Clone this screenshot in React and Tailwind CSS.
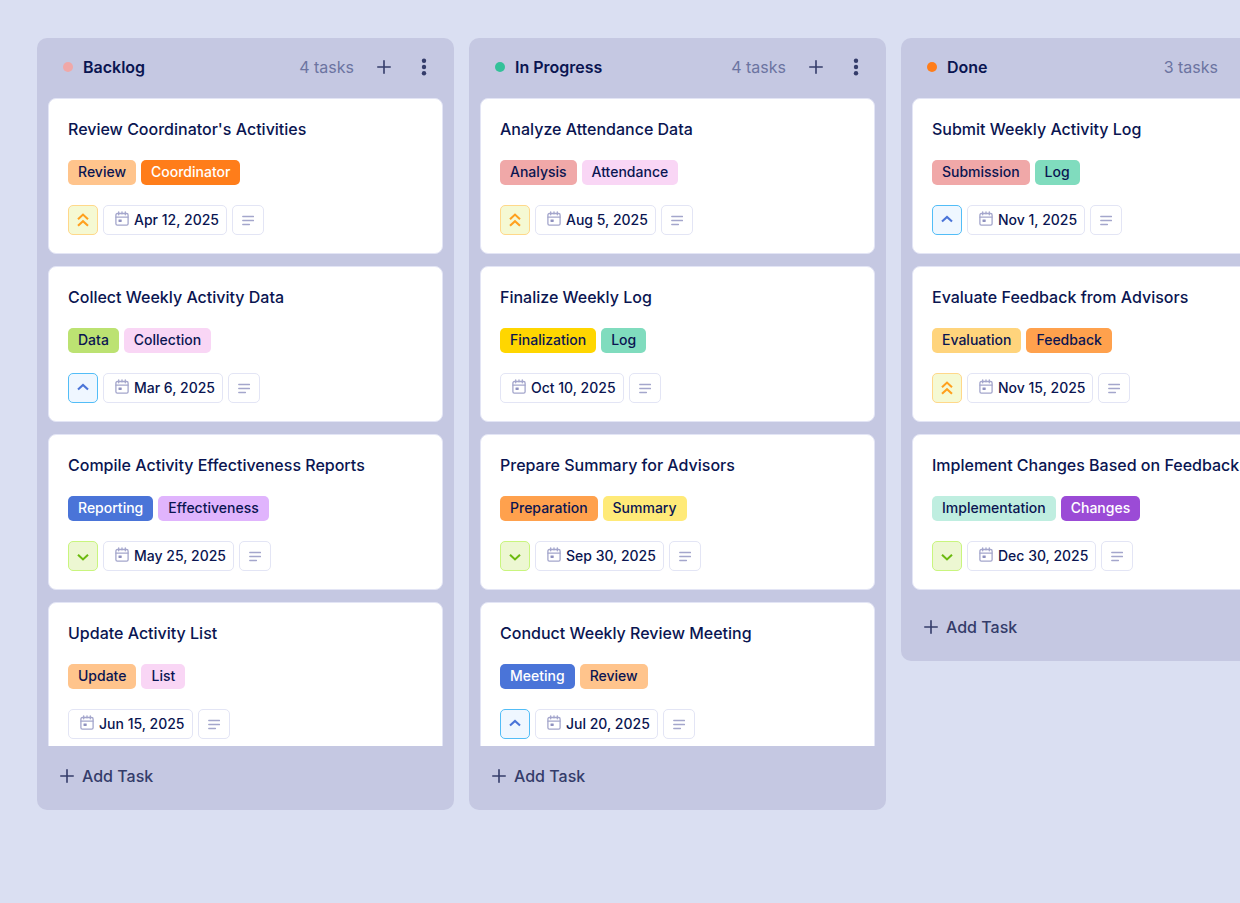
import React from "react";

const columns = [
  {
    name: "Backlog",
    dot: "bg-[#f0a8a8]",
    tasks: [
      { title: "Review Coordinator's Activities", tags: [["Review", "bg-[#ffc48c]"], ["Coordinator", "bg-[#ff7d1a] text-white"]], priority: "highest", date: "Apr 12, 2025" },
      { title: "Collect Weekly Activity Data", tags: [["Data", "bg-[#bce272]"], ["Collection", "bg-[#f9d6f5]"]], priority: "high", date: "Mar 6, 2025" },
      { title: "Compile Activity Effectiveness Reports", tags: [["Reporting", "bg-[#4a74d8] text-white"], ["Effectiveness", "bg-[#e0b4fd]"]], priority: "low", date: "May 25, 2025" },
      { title: "Update Activity List", tags: [["Update", "bg-[#ffc48c]"], ["List", "bg-[#f9d6f5]"]], date: "Jun 15, 2025" },
    ],
  },
  {
    name: "In Progress",
    dot: "bg-[#33c199]",
    tasks: [
      { title: "Analyze Attendance Data", tags: [["Analysis", "bg-[#f0a8a8]"], ["Attendance", "bg-[#f9d6f5]"]], priority: "highest", date: "Aug 5, 2025" },
      { title: "Finalize Weekly Log", tags: [["Finalization", "bg-[#ffd600]"], ["Log", "bg-[#80dcbe]"]], date: "Oct 10, 2025" },
      { title: "Prepare Summary for Advisors", tags: [["Preparation", "bg-[#ffa14d]"], ["Summary", "bg-[#ffea78]"]], priority: "low", date: "Sep 30, 2025" },
      { title: "Conduct Weekly Review Meeting", tags: [["Meeting", "bg-[#4a74d8] text-white"], ["Review", "bg-[#ffc48c]"]], priority: "high", date: "Jul 20, 2025" },
    ],
  },
  {
    name: "Done",
    dot: "bg-[#ff7d1a]",
    tasks: [
      { title: "Submit Weekly Activity Log", tags: [["Submission", "bg-[#f0a8a8]"], ["Log", "bg-[#80dcbe]"]], priority: "high", date: "Nov 1, 2025" },
      { title: "Evaluate Feedback from Advisors", tags: [["Evaluation", "bg-[#ffd47c]"], ["Feedback", "bg-[#ffa14d]"]], priority: "highest", date: "Nov 15, 2025" },
      { title: "Implement Changes Based on Feedback", tags: [["Implementation", "bg-[#bfeee0]"], ["Changes", "bg-[#9b4bd6] text-white"]], priority: "low", date: "Dec 30, 2025" },
    ],
  },
];

const priorities = {
  highest: { style: "border-[#ffd88a] bg-[#f5f9d3] text-[#ffa01e]", path: "M5 9.2 10 4.6 15 9.2M5 15.8 10 11.2 15 15.8" },
  high: { style: "border-[#52bdf7] bg-[#eff7ff] text-[#4a74d8]", path: "M5 11.6 10 7 15 11.6" },
  low: { style: "border-[#c9f57e] bg-[#edf7d2] text-[#6cba0f]", path: "M5 8.8 10 13.4 15 8.8" },
};

function PlusIcon() {
  return (
    <svg className="size-4 shrink-0" viewBox="0 0 16 16" fill="none" stroke="currentColor" strokeWidth="1.6" strokeLinecap="round" aria-hidden="true">
      <path d="M8 1.8v12.4M1.8 8h12.4" />
    </svg>
  );
}

function KebabIcon() {
  return (
    <svg className="h-[18px] w-[6px]" viewBox="0 0 6 18" fill="currentColor" aria-hidden="true">
      <circle cx="3" cy="2.8" r="2.2" />
      <circle cx="3" cy="9" r="2.2" />
      <circle cx="3" cy="15.2" r="2.2" />
    </svg>
  );
}

function CalendarIcon() {
  return (
    <svg className="mb-[2px] h-[15px] w-[14px] shrink-0" viewBox="0 0 14 15" fill="none" stroke="#a4a6cc" strokeWidth="1.3" strokeLinecap="round" aria-hidden="true">
      <rect x="0.9" y="2.5" width="12.2" height="11.6" rx="1.4" />
      <path d="M1 6.2h12M3.7 0.8v3M7 0.8v2M10.3 0.8v3" />
      <rect x="3.5" y="8.4" width="3.2" height="2.6" rx="0.4" fill="#8f91bf" stroke="none" />
    </svg>
  );
}

function LinesIcon() {
  return (
    <svg className="h-[11px] w-[12px]" viewBox="0 0 12 11" fill="none" stroke="#a4a6cc" strokeWidth="1.4" strokeLinecap="round" aria-hidden="true">
      <path d="M0.8 1.5h10.6M0.8 5.5h10.6M0.8 9.5h6.6" />
    </svg>
  );
}

function Card({ task }) {
  const priority = priorities[task.priority];
  return (
    <li className="shrink-0 rounded-lg border border-[#e3e5f5] bg-white px-[19px] pt-[19px] pb-[18px]">
      <h3 className="text-[16px] leading-[22px] font-medium whitespace-nowrap">{task.title}</h3>
      <div className="mt-5 flex gap-[5px]">
        {task.tags.map(([label, color]) => (
          <span key={label} className={`h-[25px] rounded-[5px] px-[10px] text-[14px] leading-[24px] font-medium ${color}`}>
            {label}
          </span>
        ))}
      </div>
      <div className="mt-5 flex gap-[5px]">
        {priority && (
          <button type="button" aria-label={`Priority: ${task.priority}`} className={`flex size-[30px] items-center justify-center rounded-[5px] border ${priority.style}`}>
            <svg className="size-5" viewBox="0 0 20 20" fill="none" stroke="currentColor" strokeWidth="2.1" aria-hidden="true">
              <path d={priority.path} />
            </svg>
          </button>
        )}
        <button type="button" className="flex h-[30px] items-center gap-[5px] rounded-[5px] border border-[#e3e5f5] pr-[7px] pb-[2px] pl-[11px] text-[14px] font-medium whitespace-nowrap">
          <CalendarIcon />
          {task.date}
        </button>
        <button type="button" aria-label="Description" className="flex h-[30px] w-8 items-center justify-center rounded-[5px] border border-[#e3e5f5]">
          <LinesIcon />
        </button>
      </div>
    </li>
  );
}

function Column({ column }) {
  return (
    <section className="w-[417px] shrink-0 rounded-[10px] bg-[#c5c8e2] px-[11px]">
      <header className="flex h-[60px] items-center pr-[7px] pb-[2px] pl-[15px]">
        <span className={`size-[10px] rounded-full ${column.dot}`} />
        <h2 className="ml-[10px] text-[16px] font-semibold">{column.name}</h2>
        <span className="mr-[18px] ml-auto text-[16px] text-[#6c74a1]">{column.tasks.length} tasks</span>
        <div className="flex gap-4 text-[#343c6a]">
          <button type="button" aria-label="Add task" className="flex size-6 items-center justify-center">
            <PlusIcon />
          </button>
          <button type="button" aria-label="Column menu" className="flex size-6 items-center justify-center">
            <KebabIcon />
          </button>
        </div>
      </header>
      <ul className="flex max-h-[calc(100vh-255px)] flex-col gap-3 overflow-y-auto pb-[7px] [scrollbar-width:none]">
        {column.tasks.map((task) => (
          <Card key={task.title} task={task} />
        ))}
      </ul>
      <button type="button" className="flex h-[64px] items-start gap-[7px] pt-[19px] pl-[11px] text-[16px] leading-[22px] font-medium text-[#343c6a]">
        <span className="flex h-[22px] items-center">
          <PlusIcon />
        </span>
        Add Task
      </button>
    </section>
  );
}

export default function App() {
  return (
    <main className="flex min-h-screen items-start gap-[15px] overflow-x-auto bg-[#dadff2] px-[37px] pt-[38px] font-['Inter',sans-serif] text-[#0a1551] [scrollbar-width:none]">
      {columns.map((column) => (
        <Column key={column.name} column={column} />
      ))}
    </main>
  );
}
